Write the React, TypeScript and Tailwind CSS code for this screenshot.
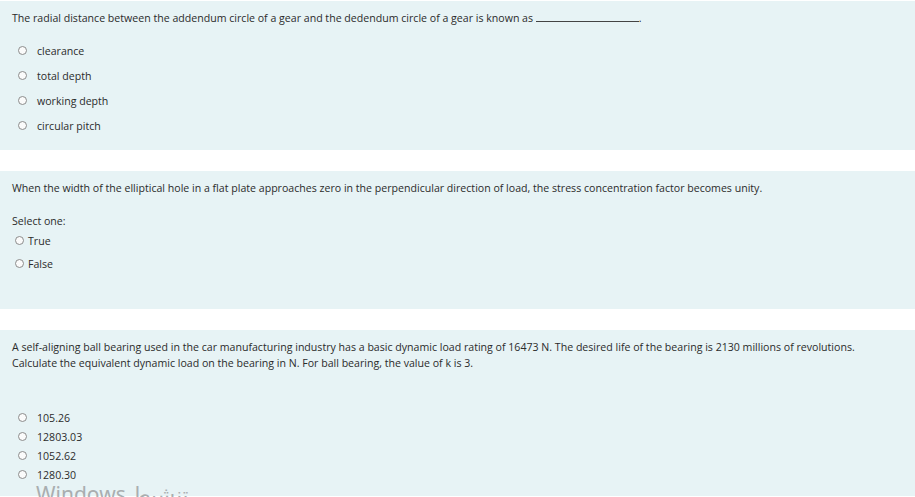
import React from "react";

const Radio = () => (
  <span className="inline-block w-[9px] h-[9px] rounded-full border border-[#8c8c8c] bg-[#fbfbfb] shrink-0" />
);

export default function App() {
  const font = { fontFamily: '"Open Sans", "Noto Sans", sans-serif' };
  return (
    <div className="relative w-[915px] h-[497px] overflow-hidden bg-white text-[#2b2b2b] text-[10.6px] leading-[16px]" style={font}>
      <div className="pt-[1px]">
        {/* Question 1 */}
        <div className="bg-[#e7f3f5] h-[149px] pl-[12px] pt-[9px]">
          <div className="h-[16px] whitespace-nowrap">
            The radial distance between the addendum circle of a gear and the dedendum circle of a gear is known as{" "}
            <span className="inline-block w-[103px] h-[10px] border-b border-[#444] align-baseline" />.
          </div>
          <div className="mt-[12px] flex flex-col">
            {["clearance", "total depth", "working depth", "circular pitch"].map((o) => (
              <div key={o} className="h-[25px] flex items-center pl-[6px] gap-[10px]">
                <Radio />
                <span>{o}</span>
              </div>
            ))}
          </div>
        </div>

        {/* Question 2 */}
        <div className="mt-[21px] bg-[#e7f3f5] h-[138px] pl-[12px] pt-[9px]">
          <div className="h-[16px] whitespace-nowrap">
            When the width of the elliptical hole in a flat plate approaches zero in the perpendicular direction of load, the stress concentration factor becomes unity.
          </div>
          <div className="mt-[17px] h-[16px]">Select one:</div>
          <div className="flex flex-col">
            {["True", "False"].map((o) => (
              <div key={o} className="h-[23px] flex items-center pl-[3px] gap-[4px]">
                <Radio />
                <span>{o}</span>
              </div>
            ))}
          </div>
        </div>

        {/* Question 3 */}
        <div className="mt-[21px] bg-[#e7f3f5] h-[166px] pl-[12px] pt-[9px]">
          <div className="whitespace-nowrap">
            A self-aligning ball bearing used in the car manufacturing industry has a basic dynamic load rating of 16473 N. The desired life of the bearing is 2130 millions of revolutions.
          </div>
          <div className="whitespace-nowrap">
            Calculate the equivalent dynamic load on the bearing in N. For ball bearing, the value of k is 3.
          </div>
          <div className="mt-[37px] flex flex-col">
            {["105.26", "12803.03", "1052.62", "1280.30"].map((o) => (
              <div key={o} className="h-[19px] flex items-center pl-[6px] gap-[10px]">
                <Radio />
                <span>{o}</span>
              </div>
            ))}
          </div>
        </div>
      </div>

      <div className="absolute left-[36px] top-[484px] text-[21px] leading-[21px] text-[#a9aeb0] whitespace-nowrap pointer-events-none" style={{ fontFamily: '"Noto Sans", "DejaVu Sans", sans-serif' }}>
        Windows تنشيط
      </div>
    </div>
  );
}
